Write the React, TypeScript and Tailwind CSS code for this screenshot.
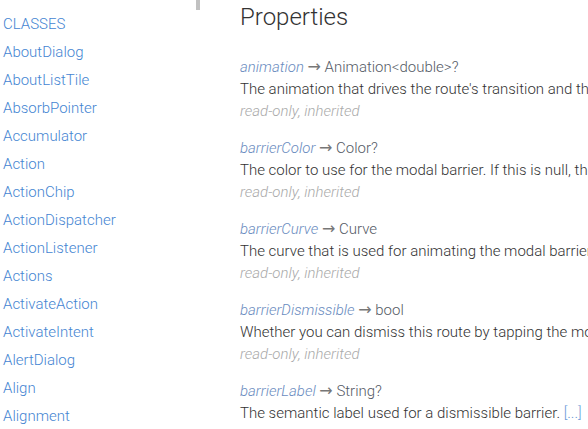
const classes = [
  "AboutDialog",
  "AboutListTile",
  "AbsorbPointer",
  "Accumulator",
  "Action",
  "ActionChip",
  "ActionDispatcher",
  "ActionListener",
  "Actions",
  "ActivateAction",
  "ActivateIntent",
  "AlertDialog",
  "Align",
  "Alignment",
  "AlignmentDirectional",
];

const props = [
  {
    name: "animation",
    type: "Animation<double>?",
    desc: "The animation that drives the route's transition and the previous route's forward transition.",
    more: false,
  },
  {
    name: "barrierColor",
    type: "Color?",
    desc: "The color to use for the modal barrier. If this is null, the barrier will be transparent.",
    more: false,
  },
  {
    name: "barrierCurve",
    type: "Curve",
    desc: "The curve that is used for animating the modal barrier in and out.",
    more: false,
  },
  {
    name: "barrierDismissible",
    type: "bool",
    desc: "Whether you can dismiss this route by tapping the modal barrier.",
    more: false,
  },
  {
    name: "barrierLabel",
    type: "String?",
    desc: "The semantic label used for a dismissible barrier.",
    more: true,
  },
];

export default function App() {
  return (
    <div className="flex h-[429px] w-[588px] overflow-hidden bg-white font-['Roboto_Light','Roboto',sans-serif] font-light">
      <div className="flex w-[200px] shrink-0">
        <ul className="flex-1 pt-[10px] pl-[3px] text-[15px] text-[#4585d2]">
          <li className="h-[28px] leading-[28px]">CLASSES</li>
          {classes.map((c) => (
            <li key={c} className="h-[28px] leading-[28px]">
              {c}
            </li>
          ))}
        </ul>
        <div className="w-[4px] shrink-0">
          <div className="h-[10px] w-[4px] bg-[#c1c1c1]" />
        </div>
      </div>
      <main className="flex-1 pl-[40px] whitespace-nowrap">
        <h1 className="pt-[2px] text-[24px] leading-[30px] font-light text-[#333]">Properties</h1>
        <dl className="mt-[24px] text-[15px] leading-[22px]">
          {props.map((p) => (
            <div key={p.name} className="mb-[15px]">
              <dt className="text-[#555b66]">
                <span className="italic text-[#6a8cc0]">{p.name}</span>{" "}
                <span className="font-['DejaVu_Sans',sans-serif] text-[16px] font-normal text-[#777]">→</span>{" "}
                <span>{p.type}</span>
              </dt>
              <dd className="text-[#333]">
                {p.desc}{" "}
                {p.more && <span className="text-[#6a9ad8]">[...]</span>}
              </dd>
              <dd className="italic text-[#aaa]">read-only, inherited</dd>
            </div>
          ))}
        </dl>
      </main>
    </div>
  );
}
